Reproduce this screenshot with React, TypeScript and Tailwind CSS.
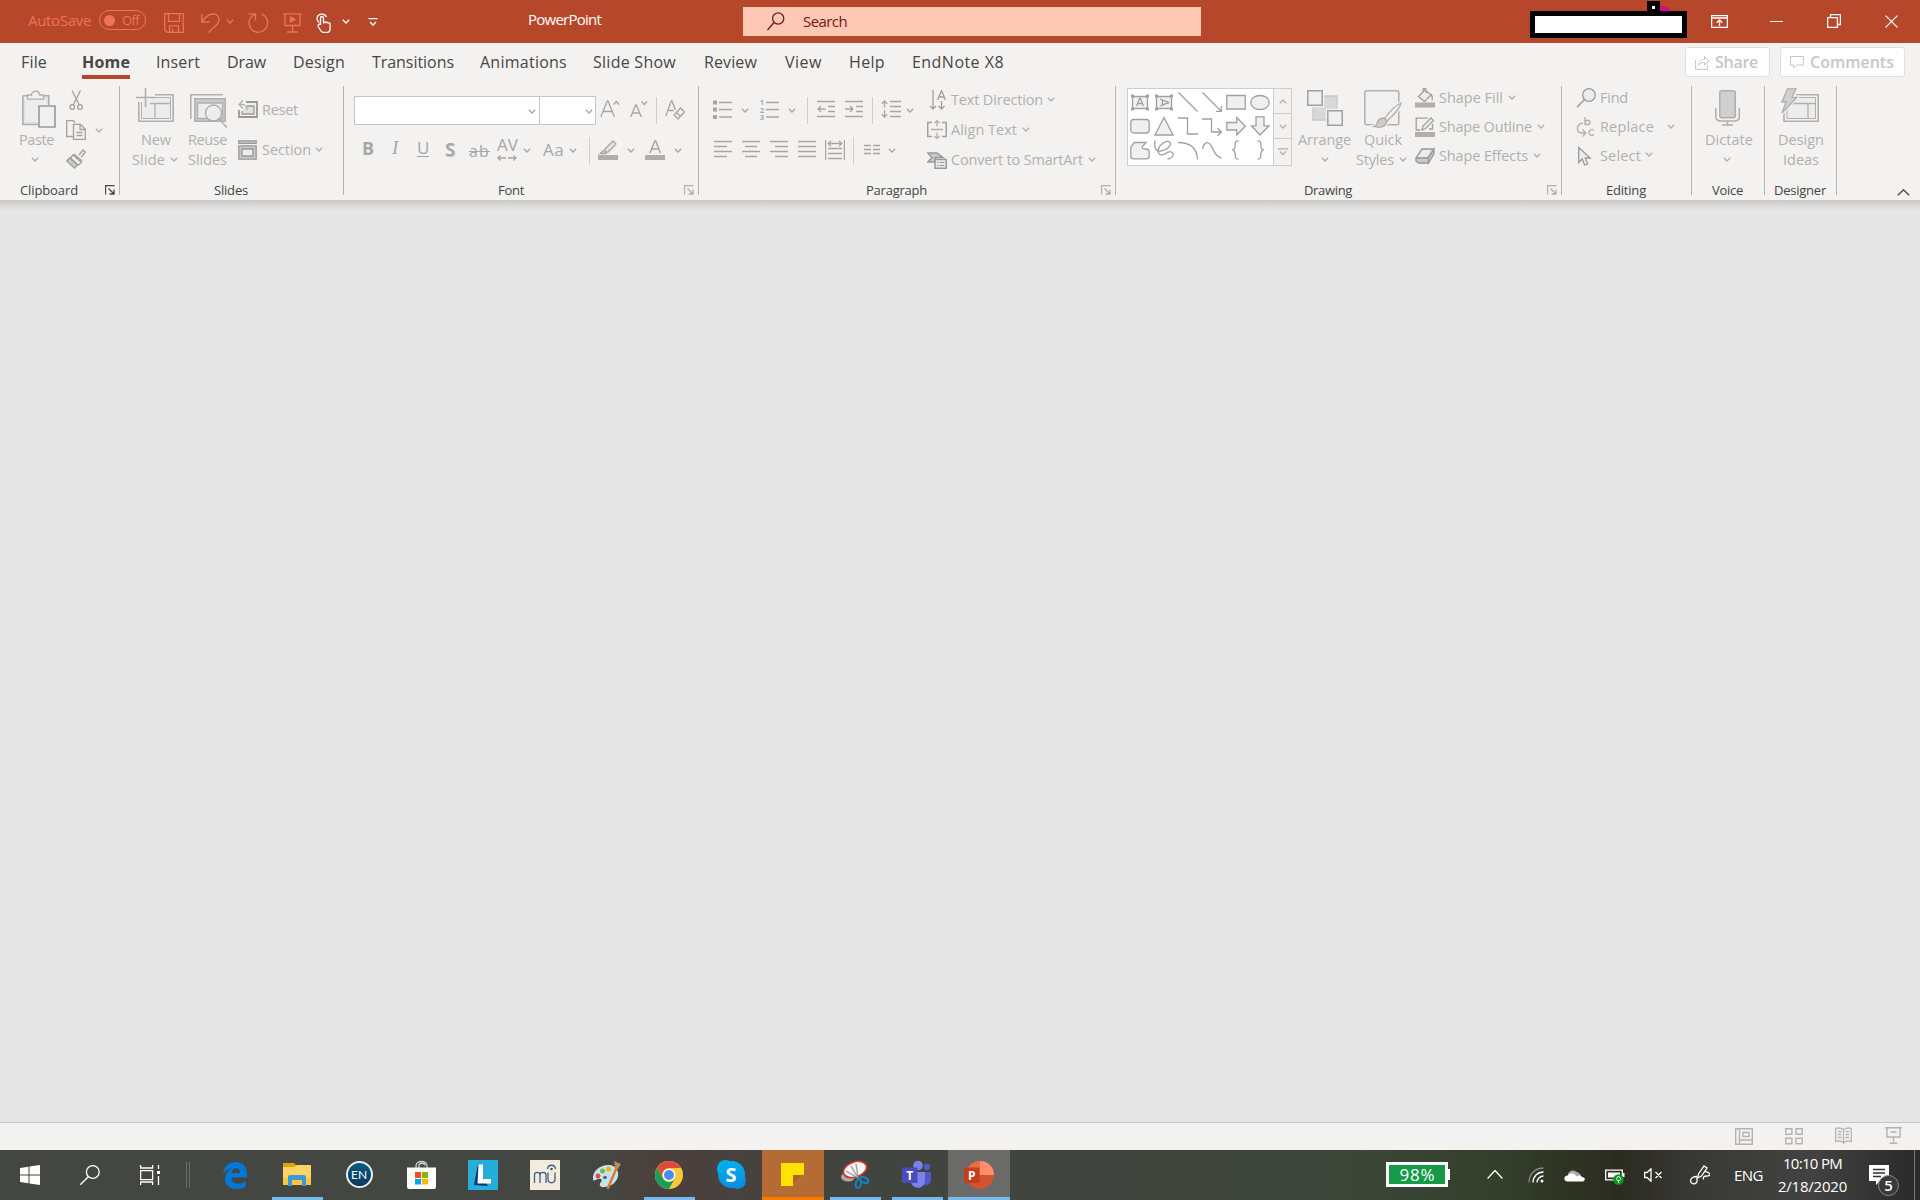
import { useLayoutEffect, useRef, useState, type ReactNode } from 'react';

/** Text whose tracking is adjusted so that it fills the given width. */
function T({ w, children, className = '' }: { w: number; children: string; className?: string }) {
  const ref = useRef<HTMLSpanElement>(null);
  const [spacing, setSpacing] = useState(0);
  useLayoutEffect(() => {
    if (ref.current) {
      setSpacing((w + 1 - ref.current.getBoundingClientRect().width) / children.length);
    }
  }, []);
  return (
    <div className={`shrink-0 pb-[2px] whitespace-nowrap leading-[18px] ${className}`} style={{ width: w }}>
      <span ref={ref} style={{ letterSpacing: spacing }}>
        {children}
      </span>
    </div>
  );
}

type IconProps = { w: number; h: number; children: ReactNode; className?: string };

function Icon({ w, h, children, className = '' }: IconProps) {
  return (
    <svg
      width={w}
      height={h}
      viewBox={`0 0 ${w} ${h}`}
      fill="none"
      stroke="currentColor"
      strokeWidth="1.3"
      className={`block shrink-0 ${className}`}
    >
      {children}
    </svg>
  );
}

function Chev({ className = '' }: { className?: string }) {
  return (
    <Icon w={8} h={5} className={className}>
      <path d="M.8.8 4 4 7.2.8" />
    </Icon>
  );
}

function Launcher({ className = '' }: { className?: string }) {
  return (
    <Icon w={10} h={10} className={className}>
      <path d="M.5 9.5v-9h9M3.5 3.5l5 5M9 4.5V9H4.5" />
    </Icon>
  );
}

function Sep({ className = '' }: { className?: string }) {
  return <div className={`h-[27px] w-px shrink-0 bg-[#cfcdcb] ${className}`} />;
}

function Group({ className, body, footer }: { className: string; body: ReactNode; footer: ReactNode }) {
  return (
    <section className={`flex h-[109px] shrink-0 flex-col border-r border-[#b5b3b1] ${className}`}>
      <div className="flex h-[95px] items-start text-[14.5px] text-[#b1afad]">{body}</div>
      <div className="flex h-[14px] items-start text-[13px] text-[#444]">{footer}</div>
    </section>
  );
}

function TitleBar() {
  return (
    <header className="flex h-[43px] items-start bg-[#b7472a] text-[15px] text-[#ee7358]">
      <T w={62} className="mt-[11px] ml-[28px]">AutoSave</T>
      <div className="mt-[10px] ml-[9px] flex h-5 w-[47px] items-center rounded-full border border-[#ee7358]">
        <div className="ml-1 size-[11px] rounded-full bg-[#ee7358]" />
        <T w={16} className="mt-[2px] ml-[7px] text-[13px]">Off</T>
      </div>
      <Icon w={20} h={20} className="mt-[13px] ml-[18px]">
        <path d="M.7.7h18.6v18.6H3.2L.7 16.8zM4.5.7v7.6h11V.7M5.5 19.3v-6.5h9v6.5M8.5 19v-3.5" />
      </Icon>
      <Icon w={19} h={20} className="mt-[13px] ml-[17px]">
        <path d="M.8 1v8.2H9M1 9C5 3 9 1 12 1c4 0 6 3 6 6 0 2-1 3.500-2.500 5L7.500 19.500" />
      </Icon>
      <Chev className="mt-[19px] ml-[6px]" />
      <Icon w={21} h={20} className="mt-[13px] ml-[14px]">
        <path d="M.5.8h7v7M7 1.500C3 3 1 6 1 10c0 5 4 9.300 9.300 9.300S19.600 15 19.600 10c0-4.500-2.600-7.500-6.100-8.800" />
      </Icon>
      <Icon w={19} h={20} className="mt-[13px] ml-[14px]">
        <path d="M0 .8h19M2 1v11.500h15V1M9.500 12.500V19M4 19h11" />
        <path d="M7.500 4v5l4.500-2.500z" fill="currentColor" />
      </Icon>
      <Icon w={15} h={20} className="mt-[13px] ml-[14px] text-white">
        <path d="M3.200 9.500A5 5 0 0 1 1 5.500 5 5 0 0 1 10.500 4M4.500 12V5a1.400 1.400 0 0 1 3 0v5.500M4.500 11c-2 0-3 1-2 3l2.500 4c.7 1 1.500 1.400 2.500 1.400h3c2.500 0 3.600-1.600 3.600-4V11c0-1.500-2-1.500-2-.5 0-1.600-2.200-1.600-2.200-.3 0-1.600-2.300-1.600-2.300 0" />
      </Icon>
      <Chev className="mt-[19px] ml-[11px] text-white" />
      <Icon w={10} h={9} className="mt-[18px] ml-[18px] text-white">
        <path d="M.5.7h9M2 4l3 3 3-3" />
      </Icon>
      <T w={72} className="mt-[10px] ml-[150px] text-white">PowerPoint</T>
      <div className="mt-[7px] ml-[143px] flex h-[29px] w-[458px] shrink-0 items-start bg-[#fdc9b5] text-[#79141b]">
        <Icon w={18} h={19} className="mt-[5px] ml-[24px]">
          <circle cx="11.200" cy="6.500" r="5.600" />
          <path d="M7 10.500.5 18" />
        </Icon>
        <T w={43} className="mt-[5px] ml-[18px]">Search</T>
      </div>
      <div className="relative mt-[11px] ml-[329px] h-[27px] w-[157px] shrink-0">
        <div className="absolute -top-[5px] left-[118px] size-[26px] rounded-full bg-[#e3008c]" />
        <div className="absolute inset-0 border-[5px] border-black bg-white" />
        <div className="absolute -top-[10px] left-[117px] size-[13px] border-5 border-black bg-white" />
      </div>
      <Icon w={17} h={13} className="mt-[15px] ml-[24px] text-white">
        <path d="M.6.6h15.800v11.800H.6zM.6 3h15.800M8.500 11V5M5.700 7.700l2.800-2.800 2.800 2.800" />
      </Icon>
      <div className="mt-[21px] ml-[42px] h-px w-[13px] shrink-0 bg-white" />
      <Icon w={14} h={14} className="mt-[14px] ml-[44px] text-white">
        <path d="M.6 3.600h9.800v9.800H.6zM3.500 3.500V.6h9.900v9.900h-3" />
      </Icon>
      <Icon w={13} h={13} className="mt-[15px] ml-[44px] text-white">
        <path d="m.6.6 11.800 11.800M12.400.6.6 12.400" />
      </Icon>
    </header>
  );
}

function Tabs() {
  return (
    <nav className="flex h-[43px] items-start bg-[#f3f2f1] text-[16px] text-[#484644]">
      <T w={25} className="mt-[10px] ml-[21px]">File</T>
      <div className="mt-[10px] ml-[36px] w-[48px] shrink-0">
        <T w={47} className="font-bold">Home</T>
        <div className="mt-[2px] h-1 bg-[#b7472a]" />
      </div>
      <T w={43} className="mt-[10px] ml-[26px]">Insert</T>
      <T w={38} className="mt-[10px] ml-[28px]">Draw</T>
      <T w={51} className="mt-[10px] ml-[28px]">Design</T>
      <T w={81} className="mt-[10px] ml-[28px]">Transitions</T>
      <T w={86} className="mt-[10px] ml-[27px]">Animations</T>
      <T w={82} className="mt-[10px] ml-[27px]">Slide Show</T>
      <T w={52} className="mt-[10px] ml-[29px]">Review</T>
      <T w={36} className="mt-[10px] ml-[29px]">View</T>
      <T w={35} className="mt-[10px] ml-[28px]">Help</T>
      <T w={91} className="mt-[10px] ml-[28px]">EndNote X8</T>
      <div className="mt-[4px] ml-[682px] flex h-[30px] w-[85px] shrink-0 items-center rounded-[3px] border border-[#e1dfdd] bg-white font-semibold text-[#c8c6c4]">
        <Icon w={15} h={15} className="ml-[9px]">
          <path d="M.6 5v9.400h12V10M3.500 10c.5-4 3-5.500 6-5.500V1.500L14 6 9.500 10V7.500C7 7.500 5 8 3.500 10z" strokeWidth="1" />
        </Icon>
        <T w={42} className="mt-[2px] ml-[5px]">Share</T>
      </div>
      <div className="mt-[4px] ml-[10px] flex h-[30px] w-[125px] shrink-0 items-center rounded-[3px] border border-[#e1dfdd] bg-white font-semibold text-[#c8c6c4]">
        <Icon w={14} h={14} className="ml-[9px]">
          <path d="M.6 1.500h12.800v8.500H6.500L3.500 13v-3H.6z" strokeWidth="1" />
        </Icon>
        <T w={83} className="mt-[2px] ml-[6px]">Comments</T>
      </div>
    </nav>
  );
}

function Clipboard() {
  return (
    <Group
      className="w-[120px]"
      body={
        <>
          <div className="ml-[19px] w-[35px] shrink-0">
            <Icon w={34} h={38} className="mt-[4px] ml-[3px]">
              <path d="M.8 5.800h26V15M.8 5.800V34.500H16" fill="#e1e1e1" strokeWidth="1.600" />
              <path d="M3.500 9h21v6h-8v16.500h-13z" fill="#ededed" stroke="none" />
              <path d="M5.500 9.200V5h4c0-5 8-5 8 0h4v4.200z" fill="#f3f2f1" />
              <path d="M17 16h16v21H17z" fill="#f0f0f0" stroke="#999" strokeWidth="1.600" />
            </Icon>
            <T w={34} className="mt-[3px]">Paste</T>
            <Chev className="mt-[6px] ml-[12px]" />
          </div>
          <div className="ml-[12px] w-[20px] shrink-0 text-[#a0a0a0]">
            <Icon w={20} h={20} className="mt-[4px]">
              <path d="M6 .5l7 14M14.500.5l-7 14" />
              <circle cx="6.300" cy="17" r="2.300" />
              <circle cx="14" cy="17" r="2.300" />
            </Icon>
            <Icon w={20} h={20} className="mt-[10px]">
              <path d="M7 16.500H.7V.7h6.500L9 2.500" />
              <path d="M7.500 4.300h7l4.800 5v10H7.500zM14 4.500v5h5M10.500 12.500h6M10.500 15.500h6" />
            </Icon>
            <Icon w={20} h={20} className="mt-[9px]">
              <path d="m13 6 4-5 2.300 2-4 5M8 5l8 7M7 6l8.500 7.500-3 2.500L4.500 9z" />
              <path d="m3.500 9 8 7-3 3L.7 12z" fill="#ccc" />
            </Icon>
          </div>
          <Chev className="mt-[42px] ml-[9px]" />
        </>
      }
      footer={
        <>
          <T w={57} className="ml-[20px]">Clipboard</T>
          <Launcher className="mt-[4px] ml-[28px]" />
        </>
      }
    />
  );
}

function Slides() {
  return (
    <Group
      className="w-[224px]"
      body={
        <>
          <div className="ml-[12px] w-[46px] shrink-0">
            <Icon w={38} h={34} className="mt-[2px] ml-[4px]">
              <path d="M2.800 14v19.200h34.400V6.800H19" strokeWidth="1.600" />
              <path d="M5.500 14v16.500h29v-21H19" fill="#ededed" strokeWidth="1" />
              <path d="M14 15.500h20M19 16v14" />
              <path d="M9.500 0v19M0 9.500h19" strokeWidth="1.600" />
            </Icon>
            <T w={29} className="mt-[9px] ml-[9px]">New</T>
            <div className="flex">
              <T w={32}>Slide</T>
              <Chev className="mt-[6px] ml-[6px]" />
            </div>
          </div>
          <div className="ml-[10px] w-[40px] shrink-0">
            <Icon w={38} h={34} className="mt-[8px] ml-[2px]">
              <path d="M.8 25V.8h32" strokeWidth="1.500" />
              <path d="M4.800 4.800h30.400v22.400H4.800z" fill="#ccc" strokeWidth="1.500" />
              <path d="M7.500 9h25v15.500h-25z" fill="#ededed" />
              <circle cx="23.500" cy="19" r="8" fill="#ededed" stroke="#aaa" />
              <path d="m29 25 8 8.500" strokeWidth="1.500" />
            </Icon>
            <T w={38} className="mt-[3px]">Reuse</T>
            <T w={38}>Slides</T>
          </div>
          <div className="ml-[10px] shrink-0">
            <div className="mt-[14px] flex">
              <Icon w={20} h={18} className="text-[#999]">
                <path d="M8 2h11v15H1V10" strokeWidth="1.800" />
                <path d="M9 6h7v8H4v-3" fill="#e1e1e1" />
                <path d="M5 .5 1 4.500l4 4M1.500 4.500C6 4 9 5 9 10" stroke="#b1afad" />
              </Icon>
              <T w={35} className="mt-[1px] ml-[4px]">Reset</T>
            </div>
            <div className="mt-[19px] flex">
              <Icon w={20} h={20} className="text-[#999]">
                <path d="M.8.8h17.400v2.500H.8zM.8 5.800h17.400v13.400H.8z" fill="#c8c8c8" />
                <path d="M4 9h11v7H4z" fill="#ededed" />
              </Icon>
              <T w={48} className="mt-px ml-[4px]">Section</T>
              <Chev className="mt-[7px] ml-[5px]" />
            </div>
          </div>
        </>
      }
      footer={<T w={33} className="ml-[94px]">Slides</T>}
    />
  );
}

function FontGroup() {
  return (
    <Group
      className="w-[355px]"
      body={
        <div className="w-full text-[#a6a6a6]">
          <div className="mt-[10px] flex h-[29px] items-start">
            <div className="ml-[10px] h-[29px] w-[186px] shrink-0 border border-[#c6c4c2] bg-white">
              <Chev className="mt-[12px] ml-[173px]" />
            </div>
            <div className="-ml-px h-[29px] w-[57px] shrink-0 border border-[#c6c4c2] bg-white">
              <Chev className="mt-[12px] ml-[45px]" />
            </div>
            <Icon w={20} h={18} className="mt-[4px] ml-[4px]">
              <path d="m.8 17 6.500-16h.7l6.500 16M3 11.500h9.300M13.500 4.500l2.800-3 2.800 3" />
            </Icon>
            <Icon w={18} h={18} className="mt-[4px] ml-[10px]">
              <path d="m.8 17 4.900-12h.7l4.900 12M2.500 13h7M11.500 1.500l2.800 3 2.800-3" />
            </Icon>
            <Sep className="mt-px ml-[8px]" />
            <Icon w={20} h={20} className="mt-[4px] ml-[8px]">
              <path d="m.8 16 5.500-15H7l3.500 9M3 10.500h6" />
              <path d="m9 15 6.500-7 4 4-6.500 7zm2.500-2.500 4 4" fill="#ededed" />
            </Icon>
          </div>
          <div className="mt-[12px] flex h-[27px] items-start">
            <T w={9} className="mt-[2px] ml-[18px] text-[18px] font-bold">B</T>
            <T w={8} className="mt-[2px] ml-[21px] font-['Liberation_Serif'] text-[19px] italic">I</T>
            <T w={11} className="mt-[2px] ml-[17px] text-[17px] underline underline-offset-2">U</T>
            <T w={9} className="mt-[3px] ml-[17px] text-[18px] font-semibold [text-shadow:1px_1px_1px_#bbb]">S</T>
            <T w={20} className="mt-[5px] ml-[15px] text-[16px] line-through">ab</T>
            <div className="ml-[8px] w-5 shrink-0">
              <T w={20} className="-mt-px text-[17px]">AV</T>
              <Icon w={20} h={6} className="-mt-px">
                <path d="M3.500.5 1 3l2.500 2.500M1 3h8M11 3h8M16.500.5 19 3l-2.500 2.500" />
              </Icon>
            </div>
            <Chev className="mt-[11px] ml-[6px]" />
            <T w={20} className="mt-[4px] ml-[12px] text-[17px]">Aa</T>
            <Chev className="mt-[11px] ml-[6px]" />
            <Sep className="ml-[12px]" />
            <Icon w={20} h={20} className="mt-[3px] ml-[8px]">
              <path d="m7 9 8-8 3 3-8 8H7zM6 10l-4 3.500h6.500" fill="#e5e5e5" />
              <path d="M0 17.500h20" stroke="#b1afad" strokeWidth="5" />
            </Icon>
            <Chev className="mt-[11px] ml-[9px]" />
            <Icon w={20} h={20} className="mt-[3px] ml-[10px]">
              <path d="m5 13 5-12.500h.5l5 12.500M6.500 9h7.500" strokeWidth="1.500" />
              <path d="M0 17.500h20" stroke="#b1afad" strokeWidth="5" />
            </Icon>
            <Chev className="mt-[11px] ml-[9px]" />
          </div>
        </div>
      }
      footer={
        <>
          <T w={25} className="ml-[154px]">Font</T>
          <Launcher className="mt-[4px] ml-[161px] text-[#b1afad]" />
        </>
      }
    />
  );
}

function Paragraph() {
  return (
    <Group
      className="w-[417px]"
      body={
        <>
          <div className="w-[228px] shrink-0 text-[#a6a6a6]">
            <div className="mt-[11px] flex h-[27px] items-start">
              <Icon w={19} h={19} className="mt-[3px] ml-[14px]">
                <path d="M6 2.500h13M6 9.500h13M6 17h13" />
                <path d="M0 2.500h4M0 9.500h4M0 17h4" strokeWidth="4" />
              </Icon>
              <Chev className="mt-[11px] ml-[9px]" />
              <div className="mt-[2px] ml-[11px] flex w-5 shrink-0">
                <div className="w-[6px] text-[7px] leading-[7.5px] font-bold">
                  <div>1</div>
                  <div>2</div>
                  <div>3</div>
                </div>
                <Icon w={13} h={20}>
                  <path d="M0 3.500h13M0 10.500h13M0 18h13" />
                </Icon>
              </div>
              <Chev className="mt-[11px] ml-[8px]" />
              <Sep className="ml-[11px]" />
              <Icon w={18} h={18} className="mt-[3px] ml-[9px]">
                <path d="M0 1.500h18M11 6.500h7M11 11.500h7M0 16.500h18M8.500 9H1M4 6 1 9l3 3" />
              </Icon>
              <Icon w={18} h={18} className="mt-[3px] ml-[10px]">
                <path d="M0 1.500h18M11 6.500h7M11 11.500h7M0 16.500h18M0 9h7.500M5 6l3 3-3 3" />
              </Icon>
              <Sep className="ml-[9px]" />
              <Icon w={20} h={18} className="mt-[3px] ml-[8px]">
                <path d="M9 1.500h11M9 6.500h11M9 11.500h11M9 16.500h11M3.500 7.500V1M.8 3.800 3.500 1l2.700 2.800M3.500 10v7M.8 14.200 3.500 17l2.700-2.800" />
              </Icon>
              <Chev className="mt-[11px] ml-[5px]" />
            </div>
            <div className="mt-[13px] flex h-[27px] items-start">
              <Icon w={18} h={18} className="mt-[3px] ml-[15px]">
                <path d="M0 1.500h18M0 6.500h13M0 11.500h18M0 16.500h13" />
              </Icon>
              <Icon w={18} h={18} className="mt-[3px] ml-[10px]">
                <path d="M0 1.500h18M3 6.500h12M0 11.500h18M3 16.500h12" />
              </Icon>
              <Icon w={18} h={18} className="mt-[3px] ml-[10px]">
                <path d="M0 1.500h18M5 6.500h13M0 11.500h18M5 16.500h13" />
              </Icon>
              <Icon w={18} h={18} className="mt-[3px] ml-[10px]">
                <path d="M0 1.500h18M0 6.500h18M0 11.500h18M0 16.500h18" />
              </Icon>
              <Icon w={20} h={20} className="mt-[3px] ml-[9px]">
                <path d="M.6 0v20M19.400 0v20M3 8.500h14M3 13.500h14M3 18.500h14M3.500 3.500h13M6 .8 3.300 3.500 6 6.200M14 .8l2.700 2.700L14 6.200" />
              </Icon>
              <Sep className="ml-[8px]" />
              <Icon w={17} h={12} className="mt-[7px] ml-[10px]">
                <path d="M0 1.500h7M9 1.500h7M0 5.500h7M9 5.500h7M0 9.500h7M9 9.500h7" />
              </Icon>
              <Chev className="mt-[11px] ml-[7px]" />
            </div>
          </div>
          <div className="shrink-0">
            <div className="mt-[4px] flex h-[30px] items-start">
              <Icon w={20} h={20} className="text-[#a0a0a0]">
                <path d="M6 0v19M3 16l3 3 3-3M14.500 11v8M11.500 16l3 3 3-3M10.500 10l4-9.500 4 9.500M12 7h5" />
              </Icon>
              <T w={91} className="mt-[1px] ml-[4px]">Text Direction</T>
              <Chev className="mt-[7px] ml-[5px]" />
            </div>
            <div className="flex h-[30px] items-start">
              <Icon w={20} h={20} className="text-[#a0a0a0]">
                <path d="M5 2.500H.7v14H5M15 2.500h4.300v14H15" strokeWidth="1.500" />
                <path d="M4 9.500h12M10 6.500V1M7.500 3 10 .7 12.500 3M10 12.500V18M7.500 16l2.500 2.500 2.500-2.500" stroke="#b1afad" />
              </Icon>
              <T w={65} className="mt-[1px] ml-[4px]">Align Text</T>
              <Chev className="mt-[7px] ml-[6px]" />
            </div>
            <div className="flex h-[30px] items-start">
              <Icon w={20} h={20} className="text-[#999]">
                <path d="M1 3h9l6 4.500H8v4.500H1l4-4.500z" fill="#ccc" strokeWidth="1.500" />
                <path d="M8 9.500h11.300v8.800H8z" fill="#ededed" strokeWidth="1.500" />
                <path d="M10 12.500h1.500M12.500 12.500h5M10 15.500h1.500M12.500 15.500h5" strokeWidth="1" />
              </Icon>
              <T w={131} className="mt-[1px] ml-[4px]">Convert to SmartArt</T>
              <Chev className="mt-[7px] ml-[6px]" />
            </div>
          </div>
        </>
      }
      footer={
        <>
          <T w={60} className="ml-[167px]">Paragraph</T>
          <Launcher className="mt-[4px] ml-[175px] text-[#b1afad]" />
        </>
      }
    />
  );
}

const shapes: ReactNode[] = [
  <>
    <path d="M2.500 4.500h15v12h-15z" fill="#f0f0f0" />
    <path d="M1 4h3M16 4h3M1 17h3M16 17h3" strokeWidth="3" />
    <path d="m6.500 14 3.300-8h.4l3.300 8M8 11.500h4" />
  </>,
  <>
    <path d="M2.500 4.500h15v12h-15z" fill="#f0f0f0" />
    <path d="M1 4h3M16 4h3M1 17h3M16 17h3" strokeWidth="3" />
    <path d="m6 7 8.500 3.300v.4L6 14M8.500 8.500v4" />
  </>,
  <path d="m.5.500 19 19" />,
  <path d="m.5.500 19 19M19.300 14v5.300H14" />,
  <path d="M.8 3.500h18.400v13.500H.8z" fill="#f0f0f0" />,
  <ellipse cx="10" cy="10.500" rx="9.300" ry="7" fill="#f0f0f0" />,
  <rect x=".8" y="3.500" width="18.400" height="13.500" rx="3" fill="#f0f0f0" />,
  <path d="M10 1.500 1 19h18z" fill="#f0f0f0" />,
  <path d="M0 2h9.500v16H20" />,
  <path d="M0 3h9.500v13H19M15.500 12l4 4-4 4" />,
  <path d="M.8 6.500h10v-5l8.500 8.800-8.500 8.700v-5H.8z" fill="#f0f0f0" />,
  <path d="M6 .8h8v9h5L10 19 1.500 9.800H6z" fill="#f0f0f0" />,
  <path d="M4.500 2.500H16l-3.500 4c-1 2 1 2.500 3 2.500 2.500 0 3.700 1 3.700 3v4c0 2-1 2.800-3 2.800H3.500C1.500 18.800.8 18 .8 16V7z" fill="#f0f0f0" />,
  <path d="M1 .5C0 8 2 12 7 11S18 6 16 2.500 6 4 4.500 9s2 7 6 5 6-3.500 8-1-1.500 6-5 6" />,
  <path d="M0 2.500c12 0 19 6 19.500 17" />,
  <path d="M0 9c2-6 5-8 8-5s4 13 11.500 14" />,
  <path d="M12.500.8c-3 0-3.300 1-3.300 4S9 9.500 6.500 10c2.500.5 2.700 2 2.700 5s.3 4 3.300 4" />,
  <path d="M7.500.8c3 0 3.300 1 3.300 4s.2 4.700 2.700 5.200c-2.500.5-2.700 2-2.700 5s-.3 4-3.300 4" />,
];

function Drawing() {
  return (
    <Group
      className="w-[446px]"
      body={
        <>
          <div className="mt-[2px] ml-[11px] flex h-[78px] w-[165px] shrink-0 border border-[#cfcdcb] bg-white">
            <div className="grid w-[145px] grid-cols-[repeat(6,20px)] content-start gap-1 pt-[3px] pl-[2px] text-[#a0a0a0]">
              {shapes.map((shape, i) => (
                <Icon key={i} w={20} h={20}>
                  {shape}
                </Icon>
              ))}
            </div>
            <div className="flex flex-1 flex-col border-l border-[#cfcdcb] bg-[#f3f2f1]">
              <div className="flex h-[25px] items-center justify-center border-b border-[#cfcdcb]">
                <Chev className="rotate-180" />
              </div>
              <div className="flex h-[25px] items-center justify-center border-b border-[#cfcdcb]">
                <Chev />
              </div>
              <div className="flex flex-1 items-center justify-center">
                <Icon w={10} h={8}>
                  <path d="M0 .8h10M2 3.500l3 3 3-3" />
                </Icon>
              </div>
            </div>
          </div>
          <div className="ml-[6px] w-[53px] shrink-0">
            <Icon w={36} h={36} className="mt-[4px] ml-[9px] text-[#a0a0a0]">
              <path d="M6 6h24v24H6z" fill="#d8d8d8" stroke="#c8c8c8" />
              <path d="M.8.8h14.400v14.400H.8zM20.800 20.800h14.400v14.400H20.800z" fill="#f3f2f1" stroke="#f3f2f1" strokeWidth="4" />
              <path d="M.8.8h14.400v14.400H.8zM20.800 20.800h14.400v14.400H20.800z" fill="#f0f0f0" strokeWidth="1.500" />
            </Icon>
            <T w={52} className="mt-[5px]">Arrange</T>
            <Chev className="mt-[6px] ml-[23px]" />
          </div>
          <div className="ml-[5px] w-[52px] shrink-0">
            <Icon w={38} h={38} className="mt-[4px] ml-[8px]">
              <rect x=".8" y=".8" width="34" height="34" rx="2" fill="#f0f0f0" strokeWidth="1.500" />
              <path d="M37 13c-5 2-12 9-17 15-4 0-6 2-7 5-.5 2-1 3-3 3.500 6 2 12 0 13-5C29 26 36 18 37 13z" fill="#f3f2f1" stroke="#f3f2f1" strokeWidth="4" />
              <path d="M37 13c-5 2-12 9-16 15l2 3c6-5 13-13 14-18z" fill="#f0f0f0" />
              <path d="M20 28c-4 0-6 2-7 5-.5 2-1 3-3 3.500 6 2 12 0 13-5z" fill="#ccc" />
            </Icon>
            <T w={37} className="mt-[3px] ml-[8px]">Quick</T>
            <div className="flex">
              <T w={37}>Styles</T>
              <Chev className="mt-[6px] ml-[6px]" />
            </div>
          </div>
          <div className="ml-[7px] shrink-0">
            <div className="mt-[2px] flex h-[29px] items-start">
              <Icon w={20} h={20} className="text-[#a0a0a0]">
                <path d="M3.500 8.500 10 2l6 5-6.500 6.500zM8 5V1.500c0-1.500 3-1.500 3 0V5M16 6c1.500 2 1.500 4 1 6.500" fill="#ededed" />
                <path d="M0 17h20" stroke="#b1afad" strokeWidth="5" />
              </Icon>
              <T w={63} className="mt-[1px] ml-[4px]">Shape Fill</T>
              <Chev className="mt-[7px] ml-[6px]" />
            </div>
            <div className="flex h-[29px] items-start">
              <Icon w={20} h={20} className="text-[#a0a0a0]">
                <path d="M13 1.200H1.200V13H5M17.500 7v5H14" />
                <path d="m7 13 1-4 8-8 2.500 2.500-8 8z" fill="#ededed" />
                <path d="M0 17.500h20" stroke="#b1afad" strokeWidth="5" />
              </Icon>
              <T w={92} className="mt-[1px] ml-[4px]">Shape Outline</T>
              <Chev className="mt-[7px] ml-[6px]" />
            </div>
            <div className="flex h-[29px] items-start">
              <Icon w={20} h={20} className="text-[#999]">
                <path d="M1 12 7 3h12l-5.500 9zM1 12h12.500v5H3.500L1 15zM19 3v5l-5.500 9v-5z" fill="#c8c8c8" />
                <path d="M3 11 7.700 4h8.500l-4.300 7z" fill="#ededed" stroke="none" />
              </Icon>
              <T w={88} className="mt-[1px] ml-[4px]">Shape Effects</T>
              <Chev className="mt-[7px] ml-[6px]" />
            </div>
          </div>
        </>
      }
      footer={
        <>
          <T w={47} className="ml-[188px]">Drawing</T>
          <Launcher className="mt-[4px] ml-[196px] text-[#b1afad]" />
        </>
      }
    />
  );
}

function Editing() {
  return (
    <Group
      className="w-[130px]"
      body={
        <div className="ml-[14px] shrink-0">
          <div className="mt-[2px] flex h-[29px] items-start">
            <Icon w={20} h={20} className="text-[#999]">
              <circle cx="13" cy="7" r="6.300" fill="#ededed" />
              <path d="M8.500 11.500 1 19.300" strokeWidth="1.500" />
            </Icon>
            <T w={27} className="mt-[1px] ml-[4px]">Find</T>
          </div>
          <div className="flex h-[29px] items-start">
            <Icon w={20} h={20}>
              <path d="M7 6C0 7 0 15 5 16h4M6.500 12.500 10 16l-3.500 3.500M9 0v8M9 5.500c0-3 5-3 5 0s-5 3-5 0M18 13.500c-2-2-5-.5-5 2s3 4 5 2" />
            </Icon>
            <T w={53} className="mt-[1px] ml-[4px]">Replace</T>
            <Chev className="mt-[7px] ml-[14px]" />
          </div>
          <div className="flex h-[29px] items-start">
            <Icon w={20} h={20} className="text-[#999]">
              <path d="M2.700 1.500v15l3.500-3.500 2.500 6 3-1.200-2.500-5.800h5z" fill="#ededed" />
            </Icon>
            <T w={40} className="mt-[1px] ml-[4px]">Select</T>
            <Chev className="mt-[6px] ml-[5px]" />
          </div>
        </div>
      }
      footer={<T w={39} className="ml-[44px]">Editing</T>}
    />
  );
}

function Voice() {
  return (
    <Group
      className="w-[73px]"
      body={
        <div className="ml-[13px] w-[48px] shrink-0">
          <Icon w={26} h={36} className="mt-[4px] ml-[10px]">
            <rect x="4.800" y=".8" width="15.500" height="27" rx="2" fill="#d0d0d0" strokeWidth="1.500" />
            <path d="M.8 18v8.500c0 3 2 4.500 5 4.500h13.500c3 0 5-1.500 5-4.500V18M12.500 31v4M7 35h11" strokeWidth="1.500" />
          </Icon>
          <T w={47} className="mt-[5px]">Dictate</T>
          <Chev className="mt-[6px] ml-[18px]" />
        </div>
      }
      footer={<T w={30} className="ml-[20px]">Voice</T>}
    />
  );
}

function Designer() {
  return (
    <Group
      className="w-[72px]"
      body={
        <div className="ml-[14px] w-[48px] shrink-0">
          <Icon w={38} h={34} className="mt-[2px] ml-[2px]">
            <path d="M3 23v10.200h34.200V6.800H15" strokeWidth="1.600" />
            <path d="M6 22v8.500h28.500v-21H14z" fill="#ededed" strokeWidth="1" />
            <path d="M11 15.500h23M27 16v14" />
            <path d="M6.500.8H15l-4 8.500h5L1 25l4-11H.8z" fill="#c8c8c8" stroke="#f3f2f1" strokeWidth="3.500" />
            <path d="M6.500.8H15l-4 8.500h5L1 25l4-11H.8z" fill="#d0d0d0" />
          </Icon>
          <T w={45} className="mt-[9px] -ml-px">Design</T>
          <T w={35} className="ml-[4px]">Ideas</T>
        </div>
      }
      footer={<T w={51} className="ml-[9px]">Designer</T>}
    />
  );
}

function StatusBar() {
  return (
    <footer className="flex h-[28px] shrink-0 items-start border-t border-[#c6c6c6] bg-[#f3f2f1] text-[#b5b3b1]">
      <Icon w={18} h={17} className="mt-[5px] ml-[1735px]">
        <path d="M.7.7h16.600v15.600H.7zM4.500 1v15M4.500 12h13M8 4.500h6v4H8z" strokeWidth="1.400" />
      </Icon>
      <Icon w={18} h={17} className="mt-[5px] ml-[32px]">
        <path d="M.7.7h6.200v5.500H.7zM11 .7h6.200v5.500H11zM.7 10.200h6.200v5.500H.7zM11 10.200h6.200v5.500H11z" strokeWidth="1.400" />
      </Icon>
      <Icon w={17} h={17} className="mt-[4px] ml-[32px]">
        <path d="M8.500 2.500C6 .8 3 .8.7 1.500v13c2.300-.7 5.300-.7 7.800 1 2.500-1.700 5.500-1.700 7.800-1v-13c-2.300-.7-5.300-.7-7.800 1zV17M3 4.500h3.500M3 7.500h3.500M3 10.500h3.500M10.500 4.500H14M10.500 7.500H14M10.500 10.500H14" />
      </Icon>
      <Icon w={17} h={17} className="mt-[4px] ml-[33px]">
        <path d="M0 .8h17M2 1v9h13V1M5.500 5h6M8.500 10v6M4.500 16.200h8" strokeWidth="1.400" />
      </Icon>
    </footer>
  );
}

function Cell({ children, cell = '', bar = '' }: { children: ReactNode; cell?: string; bar?: string }) {
  return (
    <div className={`flex h-[50px] w-[62px] shrink-0 flex-col items-center ${cell}`}>
      <div className="h-[47px] pt-[10px]">{children}</div>
      <div className={`h-[3px] ${bar}`} />
    </div>
  );
}

function Taskbar() {
  return (
    <div className="flex h-[50px] shrink-0 items-start bg-[linear-gradient(90deg,#444641_0px,#444641_600px,#4c403c_665px,#484240_735px,#42443f_850px,#42453f_1100px,#3b4638_1360px,#333f2b_1500px,#2b2c20_1620px,#393937_1700px,#424242_1810px,#2c2c2c_1910px)] text-white">
      <Icon w={20} h={20} className="mt-[15px] ml-[20px]">
        <path d="m0 3 8.500-1.200V9.500H0zM9.500 1.600 20 0v9.500H9.500zM0 10.500h8.500v7.700L0 17zM9.500 10.500H20V20L9.500 18.400z" fill="#fff" stroke="none" />
      </Icon>
      <Icon w={20} h={20} className="mt-[15px] ml-[40px]">
        <circle cx="12.800" cy="7" r="6.400" />
        <path d="m8.300 11.700-8 8" />
      </Icon>
      <Icon w={20} h={20} className="mt-[15px] ml-[40px]">
        <path d="M.6 5.600h12v9H.6zM.6 0v3h12V0M.6 20v-3h12v3M18.500 0v4M18.500 11v9" />
        <path d="M17 6h3v3h-3z" fill="#fff" stroke="none" />
      </Icon>
      <div className="mt-[12px] ml-[26px] h-[26px] w-[4px] shrink-0 border-x border-[#6d6e6a]" />
      <div className="w-[14px] shrink-0" />
      <Cell>
        <Icon w={26} h={30} className="-ml-px">
          <path d="M1 14C2 6 7 2 13 2c8 0 12 5.500 12 12v3.500H9.500c0 4 3 6 6.500 6 3 0 5.500-1 7.500-2V27c-2 1.200-5 2-8.500 2C7 29 3 24.500 3 19c0-5 2.500-8.500 7-10.500-4 0-7.500 2.500-9 5.500zm8.500-1H18c0-3-1.500-4.500-4.200-4.500S9.700 10.300 9.500 13z" fill="#0078d7" stroke="none" />
        </Icon>
      </Cell>
      <Cell bar="w-[51px] bg-[#76b9ed]">
        <Icon w={28} h={30}>
          <g stroke="none">
            <path d="M0 3h11l3 3v5H0z" fill="#e5a000" />
            <path d="M0 7h11l3-2h14v20H0z" fill="#ffd264" />
            <path d="M0 18h28v7H0z" fill="#fbc63c" />
            <path d="M5 26V17q0-2 2-2h14q2 0 2 2v9h-4v-6H9v6z" fill="#3a96dd" />
          </g>
        </Icon>
      </Cell>
      <Cell>
        <div className="mt-[1px] flex size-[27px] items-center justify-center rounded-full border-2 border-[#e8eef2] bg-linear-to-b from-[#0a5a85] to-[#0a3858] font-['Lato'] text-[12px] text-white">
          EN
        </div>
      </Cell>
      <Cell>
        <Icon w={29} h={30}>
          <path d="M9 8V6c0-6 11-6 11 0v2M12 8V5.500c0-3 6-3 6 0" stroke="#ccc" />
          <g stroke="none">
            <path d="M0 7.500h29V27q0 2-2 2H2q-2 0-2-2z" fill="#fff" />
            <path d="M8 12h6v6H8z" fill="#f25022" />
            <path d="M15 12h6v6h-6z" fill="#7fba00" />
            <path d="M8 19h6v5.500H8z" fill="#00a4ef" />
            <path d="M15 19h6v5.500h-6z" fill="#ffb900" />
          </g>
        </Icon>
      </Cell>
      <Cell>
        <Icon w={30} h={30}>
          <g stroke="none">
            <path d="M0 0h30v30H0z" fill="#25aedb" />
            <path d="M10 4 6 25l14 1-4-6z" fill="#07366e" />
            <path d="M10.500 4.500h4.500V19h8v4.500H9.500z" fill="#fff" />
          </g>
        </Icon>
      </Cell>
      <Cell>
        <Icon w={30} h={30} className="text-[#3c5f8a]">
          <path d="M0 0h30v30H0z" fill="#f3ecdc" stroke="none" />
          <path d="M4.500 23v-8c0-3.500 5.500-3.500 5.500 0v8M10 15c0-3.500 6-3.500 6 0v8M18 12.500V19c0 5 7 5 7 0v-6.500M17.500 9c.5-5 7.500-5 8 0" />
          <circle cx="21.500" cy="9" r=".7" />
        </Icon>
      </Cell>
      <Cell>
        <Icon w={30} h={30}>
          <g stroke="none">
            <path d="M1 19C0 10 10 4 18 5c6 1 9 6 8 11-1 6-6 10-13 11-6 1-6-3-4-5 2-3-1-4-3-3-3 1-5 3-5 0z" fill="#c5e2f2" />
            <circle cx="6" cy="16" r="2.400" fill="#e8483c" />
            <circle cx="10.500" cy="11" r="2.500" fill="#6cc04a" />
            <circle cx="16.500" cy="9" r="2.500" fill="#f5b400" />
            <circle cx="13" cy="17.500" r="1.800" fill="#55606a" />
          </g>
          <path d="M25 7 15.500 29" stroke="#dd7a2c" strokeWidth="2.500" />
          <path d="m22 1 7 3-3 5-3-2z" fill="#b88a5c" stroke="none" />
        </Icon>
      </Cell>
      <Cell bar="w-[51px] bg-[#76b9ed]">
        <Icon w={28} h={30}>
          <g stroke="none">
            <circle cx="14" cy="15" r="14" fill="#f9c93c" />
            <path d="M1.900 8A14 14 0 0 1 26.100 8H14a7 7 0 0 0-6.200 10z" fill="#dd4b3e" />
            <path d="M1.900 8a14 14 0 0 0 12 21l6-10.500a7 7 0 0 1-12 0z" fill="#1a9d58" />
            <circle cx="14" cy="15" r="6.300" fill="#fff" />
            <circle cx="14" cy="15" r="5" fill="#4a8bf5" />
          </g>
        </Icon>
      </Cell>
      <Cell>
        <div className="relative flex size-[29px] items-center justify-center">
          <div className="absolute top-0 left-0 size-[17px] rounded-full bg-[#00aff0]" />
          <div className="absolute right-0 bottom-0 size-[17px] rounded-full bg-[#0a8fe0]" />
          <div className="absolute inset-[1px] rounded-full bg-linear-to-b from-[#00aff0] to-[#0a8fe0]" />
          <span className="relative font-['Open_Sans'] text-[20px] leading-none font-bold">S</span>
        </div>
      </Cell>
      <Cell cell="bg-[#b56c34]" bar="w-[62px] bg-[#ff7800]">
        <Icon w={23} h={30} className="-ml-px">
          <path d="M0 3h23v12L12 26H0z" fill="#ffe100" stroke="none" />
          <path d="M12 15h11L12 26z" fill="#a8642a" stroke="none" />
        </Icon>
      </Cell>
      <Cell bar="w-[51px] bg-[#76b9ed]">
        <Icon w={28} h={30}>
          <ellipse cx="7" cy="17" rx="7" ry="4.500" fill="#aaa" stroke="none" />
          <ellipse cx="14" cy="9.500" rx="12" ry="7.500" transform="rotate(-20 14 9.500)" fill="#f4f4f4" stroke="#d9322e" strokeWidth="1.600" />
          <path d="M10 6l7 12M15 4l2 13M5 11l12 7" stroke="#999" />
          <ellipse cx="17.500" cy="23.500" rx="2.700" ry="4.500" transform="rotate(15 17.500 23.500)" stroke="#1b80c4" strokeWidth="2" />
          <ellipse cx="23" cy="20" rx="4.500" ry="2.600" transform="rotate(25 23 20)" stroke="#1b80c4" strokeWidth="2" />
        </Icon>
      </Cell>
      <Cell bar="w-[51px] bg-[#76b9ed]">
        <Icon w={30} h={30}>
          <g stroke="none">
            <circle cx="25" cy="7" r="3.200" fill="#5059c9" />
            <path d="M20 12h9v8c0 5-6 7-9 3z" fill="#5059c9" />
            <circle cx="16" cy="5.500" r="4.800" fill="#7b83eb" />
            <path d="M9 12h14v9c0 9-14 9-14 0z" fill="#7b83eb" />
            <path d="M0 7.500h15.500V23H0z" fill="#464eb8" />
          </g>
          <text x="7.700" y="19.500" textAnchor="middle" fill="#fff" stroke="none" className="font-['Open_Sans'] text-[12px] font-bold">T</text>
        </Icon>
      </Cell>
      <Cell cell="bg-[#6b6b6a]" bar="w-[62px] bg-[#76b9ed]">
        <Icon w={30} h={30}>
          <g stroke="none">
            <circle cx="16" cy="15" r="14" fill="#d35230" />
            <path d="M16 1A14 14 0 0 0 2 15h14z" fill="#ed6c47" />
            <path d="M16 1a14 14 0 0 1 14 14H16z" fill="#ff8f6b" />
            <path d="M0 7.500h15.500V23H0z" fill="#c43e1c" />
          </g>
          <text x="7.700" y="19.800" textAnchor="middle" fill="#fff" stroke="none" className="font-['Open_Sans'] text-[12px] font-bold">P</text>
        </Icon>
      </Cell>

      <div className="mt-[12px] ml-[376px] flex h-[25px] w-[62px] shrink-0 items-center justify-center border-[3px] border-white bg-[#159a48] text-[17px]">
        <T w={35} className="mt-[2px]">98%</T>
      </div>
      <div className="mt-[19px] h-[11px] w-[2px] shrink-0 bg-white" />
      <Icon w={16} h={9} className="mt-[20px] ml-[37px]">
        <path d="m.6 8.500 7.400-8 7.400 8" />
      </Icon>
      <Icon w={16} h={16} className="mt-[17px] ml-[25px]">
        <path d="M1 15.500C1 7 7 1 15.500 1" stroke="#888" />
        <path d="M5 15.500C5 9.500 9.500 5 15.500 5M9 15.500C9 12 12 9 15.500 9" />
        <circle cx="14" cy="14" r="1.500" fill="#fff" stroke="none" />
      </Icon>
      <Icon w={21} h={14} className="mt-[18px] ml-[20px]">
        <path d="M4 9c-1-4 3-8 7-6s6 3 6 6z" fill="#aaa" stroke="none" />
        <path d="M3.500 13.500C-1 13.500-.5 7 4 7.500 6 4 10.500 5 12 8l1 .5c2-1.500 4-1 5 .5 4 0 3.500 4.500 0 4.500z" fill="#fff" stroke="none" />
      </Icon>
      <Icon w={20} h={16} className="mt-[19px] ml-[20px]">
        <path d="M.7 1.200h16.600v9.600H.7z" />
        <path d="M3 3.500h12v5H3zM18 4h1.500v4H18z" fill="#fff" stroke="none" />
        <circle cx="13.500" cy="10.500" r="5.300" fill="#0a9a22" stroke="none" />
        <path d="M13.500 14v-3M11.500 9.500c0 3 4 3 4 0l-2-2.500z" strokeWidth="1" />
      </Icon>
      <Icon w={19} h={14} className="mt-[18px] ml-[19px]">
        <path d="M.6 4.500h2.500L7 .8v12.400L3.100 9.500H.6zM11.500 4l6 6M17.500 4l-6 6" />
      </Icon>
      <Icon w={20} h={20} className="mt-[15px] ml-[27px]">
        <path d="m7.500 13 1-4L14 1l3 2-5.500 8zM7 11.500c-4 0-6.500 2-6.500 4.500s4 4 6 1.500-1-3 1-5M15 6.500c6 1 6 4.500 2 4.500-3 0-4 1-3.500 3.500" />
      </Icon>
      <T w={28} className="mt-[16px] ml-[24px] text-[15px]">ENG</T>
      <div className="mt-[4px] ml-[16px] w-[68px] shrink-0 text-[15px]">
        <T w={58} className="ml-[5px]">10:10 PM</T>
        <T w={68} className="mt-[3px]">2/18/2020</T>
      </div>
      <div className="relative mt-[15px] ml-[23px] h-[31px] w-[30px] shrink-0">
        <Icon w={20} h={21}>
          <path d="M0 0h20v16h-9l-4 4v-4H0z" fill="#fff" stroke="none" />
          <path d="M4 4.500h12M4 8h12M4 11.500h8" stroke="#333" />
        </Icon>
        <div className="absolute right-0 bottom-0 flex size-[21px] items-center justify-center rounded-full border border-[#8a8a8a] bg-[#3a3a3a] text-[15px] font-semibold">
          5
        </div>
      </div>
      <div className="ml-[15px] h-[50px] w-px shrink-0 bg-[#7a7a7a]" />
    </div>
  );
}

export default function App() {
  return (
    <div className="flex h-[1200px] w-[1920px] flex-col overflow-hidden bg-[#e6e6e6] font-['Open_Sans','Noto_Sans',sans-serif]">
      <TitleBar />
      <Tabs />
      <div className="flex h-[114px] shrink-0 items-start bg-[#f3f2f1]">
        <Clipboard />
        <Slides />
        <FontGroup />
        <Paragraph />
        <Drawing />
        <Editing />
        <Voice />
        <Designer />
        <Icon w={13} h={7} className="mt-[103px] ml-[60px] text-[#444]">
          <path d="M.8 6.300 6.500.8l5.700 5.500" />
        </Icon>
      </div>
      <div className="h-[10px] shrink-0 bg-linear-to-b from-[#cbc9c8] to-[#e6e6e6]" />
      <main className="flex-1" />
      <StatusBar />
      <Taskbar />
    </div>
  );
}
